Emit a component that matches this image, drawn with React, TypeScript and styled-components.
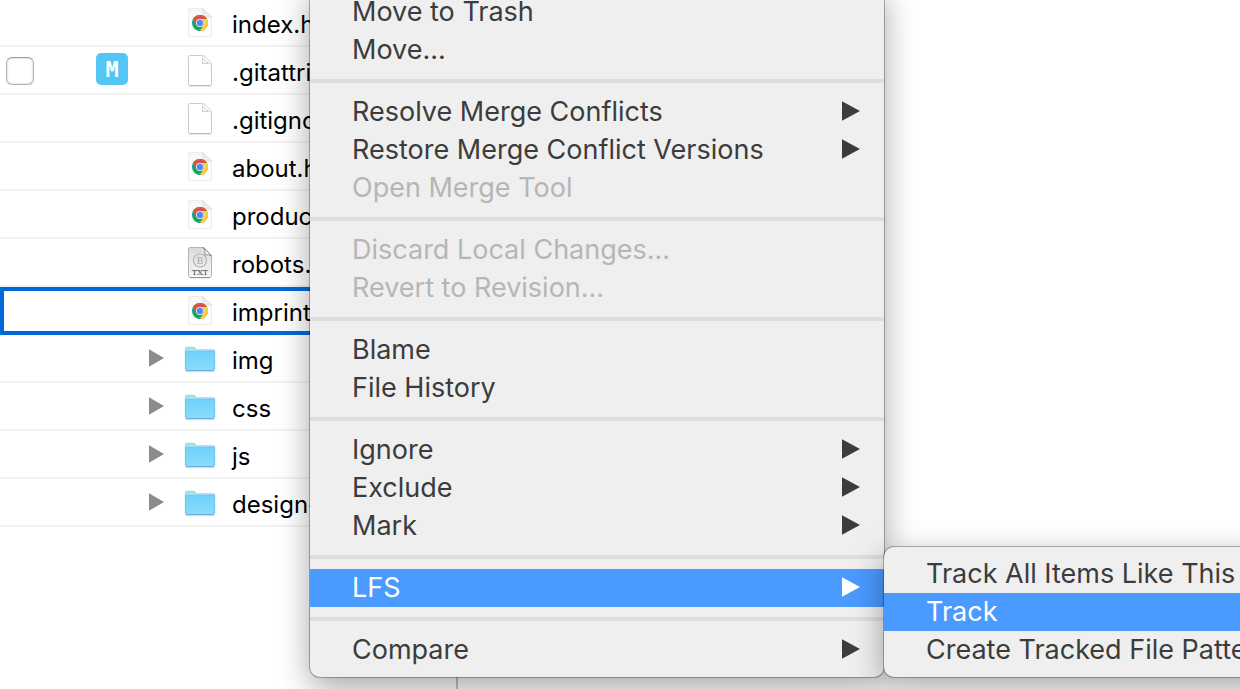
import React from 'react';
import styled, { createGlobalStyle } from 'styled-components';

const GlobalStyle = createGlobalStyle`
  * {
    box-sizing: border-box;
  }

  body {
    margin: 0;
    overflow: hidden;
    background: #ffffff;
    font-family: Inter, "Liberation Sans", sans-serif;
  }
`;

const Window = styled.main`
  position: relative;
  display: flex;
  min-height: 100vh;
  overflow: hidden;
`;

const FilePane = styled.section`
  flex: none;
  width: 458px;
  border-right: 2px solid #c4c4c4;
`;

const FileList = styled.ul`
  margin: -1px 0 0;
  padding: 0;
  list-style: none;
`;

const FileRow = styled.li<{ $focused?: boolean }>`
  display: grid;
  grid-template-columns: 96px 53px 35px 32px 1fr;
  align-items: center;
  height: 48px;
  border-bottom: 2px solid #f2f2f2;
  outline: ${({ $focused }) => ($focused ? '4px solid #0069d9' : 'none')};
  outline-offset: -4px;
`;

const Cell = styled.span`
  display: flex;
  align-items: center;
`;

const IconCell = styled(Cell)`
  padding-top: 2px;
`;

const CheckLabel = styled.label`
  display: flex;
  padding: 2px 0 0 6px;
`;

const StageCheckbox = styled.input`
  appearance: none;
  width: 28px;
  height: 28px;
  margin: 0;
  border: 1px solid #b4b4b4;
  border-top-color: #9a9a9a;
  border-radius: 6px;
  background: #ffffff;
  box-shadow: inset 0 0 2px rgba(0, 0, 0, 0.3);
`;

const StatusBadge = styled.span`
  display: grid;
  place-items: center;
  width: 32px;
  height: 32px;
  margin-bottom: 2px;
  padding-top: 2px;
  border-radius: 5px;
  background: #54c6f4;
  color: #ffffff;
  font: bold 22px/30px "DejaVu Sans Mono", monospace;
`;

const Disclosure = styled.button`
  display: flex;
  padding: 0;
  border: 0;
  background: none;
  color: #8b8b8b;
`;

const FileName = styled.span`
  padding: 6px 0 0 16px;
  color: #000000;
  font-size: 24px;
  line-height: 32px;
  white-space: nowrap;
`;

const Menu = styled.div`
  position: absolute;
  padding: 8px 0;
  border-radius: 10px;
  background: #efefef;
  box-shadow: 0 0 0 1px rgba(0, 0, 0, 0.28), 0 10px 32px rgba(0, 0, 0, 0.36);
`;

const ContextMenu = styled(Menu)`
  top: -15px;
  left: 310px;
  width: 574px;
`;

const SubMenu = styled(Menu)`
  top: -22px;
  left: 100%;
`;

const MenuEntry = styled.div`
  position: relative;
`;

const MenuItem = styled.button<{ $active?: boolean }>`
  display: flex;
  align-items: center;
  justify-content: space-between;
  width: 100%;
  height: 38px;
  padding: 0 24px 2px 42px;
  border: 0;
  background: ${({ $active }) => ($active ? '#4a9aff' : 'transparent')};
  color: ${({ $active }) => ($active ? '#ffffff' : '#3c3c3c')};
  font: 27px/34px Inter, "Liberation Sans", sans-serif;
  text-align: left;
  white-space: nowrap;

  &:disabled {
    color: #b6b6b6;
  }
`;

const MenuLabel = styled.span`
  padding-top: 2px;
`;

const Separator = styled.hr`
  height: 4px;
  margin: 10px 0;
  border: 0;
  background: #dedede;
`;

const Triangle = ({ width, height }: { width: number; height: number }) => (
  <svg width={width} height={height} viewBox="0 0 18 20" preserveAspectRatio="none" aria-hidden="true">
    <path d="M0 0.3 18 10 0 19.7Z" fill="currentColor" />
  </svg>
);

const PageIcon = () => (
  <svg width="32" height="34" viewBox="0 0 32 34" aria-hidden="true">
    <path d="M5.5 1.5H18.5Q21 2 23 4.5L26 7.5Q27.5 9.5 27.5 12V30Q27.5 31.5 26 31.5H6Q4.5 31.5 4.5 30V2.5Q4.5 1.5 5.5 1.5Z" fill="#fff" stroke="#cccccc" />
    <path d="M5 31.8H27" stroke="#b4b4b4" />
    <path d="M18.5 1.5V9.5H26" fill="none" stroke="#e2e2e2" />
    <path d="M18.5 4V9.5H24.5Z" fill="#fdfdfd" stroke="#cccccc" />
  </svg>
);

const ChromePageIcon = () => (
  <svg width="32" height="34" viewBox="0 0 32 34" aria-hidden="true">
    <defs>
      <linearGradient id="chrome-page" x1="0" y1="0" x2="0" y2="1">
        <stop offset="0" stopColor="#f5f5f5" />
        <stop offset="0.7" stopColor="#ffffff" />
      </linearGradient>
    </defs>
    <path d="M4.5 2.5H19L27.5 11V30.5H4.5Z" fill="url(#chrome-page)" stroke="#ececec" />
    <path d="M19 2.5V11H27.5Z" fill="#ececec" stroke="#e4e4e4" />
    <circle cx="16" cy="17" r="8" fill="#1da261" />
    <path d="M9.07 13A8 8 0 0 1 22.93 13H16A4 4 0 0 0 12.54 19Z" fill="#de5145" />
    <path d="M22.93 13A8 8 0 0 1 16 25L19.46 19A4 4 0 0 0 16 13Z" fill="#ffce46" />
    <circle cx="16" cy="17" r="4" fill="#eef3fa" />
    <circle cx="16" cy="17" r="3.2" fill="#4b8bf5" />
  </svg>
);

const TextPageIcon = () => (
  <svg width="32" height="34" viewBox="0 0 32 34" aria-hidden="true">
    <defs>
      <linearGradient id="txt-page" x1="0" y1="0" x2="0" y2="1">
        <stop offset="0" stopColor="#dadada" />
        <stop offset="1" stopColor="#f8f8f8" />
      </linearGradient>
    </defs>
    <path d="M6 1.5H20L27.5 9.5V29.5Q27.5 31.5 25.5 31.5H6.5Q4.5 31.5 4.5 29.5V3Q4.5 1.5 6 1.5Z" fill="url(#txt-page)" stroke="#b3b3b3" />
    <path d="M6 31.7H26" stroke="#8f8f8f" />
    <path d="M19.5 1.5Q21.5 5 21 9Q25 8 27.5 10Z" fill="#ffffff" stroke="#777" strokeWidth="0.8" />
    <circle cx="16" cy="14.5" r="6.5" fill="none" stroke="#b5b5b5" strokeWidth="1.2" />
    <text x="16" y="18" textAnchor="middle" fill="#aaaaaa" fontFamily="Liberation Serif, serif" fontSize="10">B</text>
    <text x="16" y="29" textAnchor="middle" fill="#444444" fontFamily="DejaVu Serif, serif" fontSize="8">TXT</text>
  </svg>
);

const FolderIcon = () => (
  <svg width="32" height="28" viewBox="0 0 32 28" aria-hidden="true">
    <defs>
      <linearGradient id="folder" x1="0" y1="0" x2="0" y2="1">
        <stop offset="0" stopColor="#72d0f8" />
        <stop offset="1" stopColor="#88dcfe" />
      </linearGradient>
    </defs>
    <path d="M1.5 24V3.5Q1.5 2.3 2.7 2.3H9.5Q10.5 2.3 11.2 3.2L12.5 4.8H29.5Q30.7 4.8 30.7 6V24Z" fill="#a5e3fc" stroke="#8bcbe8" strokeWidth="0.8" />
    <path d="M1.4 6.4H30.6V24.3Q30.6 25.5 29.4 25.5H2.6Q1.4 25.5 1.4 24.3Z" fill="url(#folder)" stroke="#6fc2e6" strokeWidth="0.8" />
    <path d="M2 25.6H30" stroke="#60afd2" />
    <path d="M2 26.6H30" stroke="#000" strokeOpacity="0.12" />
  </svg>
);

type Kind = 'chrome' | 'page' | 'txt' | 'folder';

const icons: Record<Kind, React.FC> = {
  chrome: ChromePageIcon,
  page: PageIcon,
  txt: TextPageIcon,
  folder: FolderIcon,
};

const files: { name: string; kind: Kind; modified?: boolean; focused?: boolean }[] = [
  { name: 'index.html', kind: 'chrome' },
  { name: '.gitattributes', kind: 'page', modified: true },
  { name: '.gitignore', kind: 'page' },
  { name: 'about.html', kind: 'chrome' },
  { name: 'product.html', kind: 'chrome' },
  { name: 'robots.txt', kind: 'txt' },
  { name: 'imprint.html', kind: 'chrome', focused: true },
  { name: 'img', kind: 'folder' },
  { name: 'css', kind: 'folder' },
  { name: 'js', kind: 'folder' },
  { name: 'design-files', kind: 'folder' },
];

type Entry = { label: string; disabled?: boolean; more?: boolean; children?: string[] };

const groups: Entry[][] = [
  [{ label: 'Move to Trash' }, { label: 'Move...' }],
  [
    { label: 'Resolve Merge Conflicts', more: true },
    { label: 'Restore Merge Conflict Versions', more: true },
    { label: 'Open Merge Tool', disabled: true },
  ],
  [
    { label: 'Discard Local Changes...', disabled: true },
    { label: 'Revert to Revision...', disabled: true },
  ],
  [{ label: 'Blame' }, { label: 'File History' }],
  [
    { label: 'Ignore', more: true },
    { label: 'Exclude', more: true },
    { label: 'Mark', more: true },
  ],
  [
    {
      label: 'LFS',
      more: true,
      children: ['Track All Items Like This', 'Track', 'Create Tracked File Pattern...'],
    },
  ],
  [{ label: 'Compare', more: true }],
];

export default function App() {
  return (
    <Window>
      <GlobalStyle />
      <FilePane aria-label="Files">
        <FileList>
          {files.map(({ name, kind, modified, focused }) => {
            const Icon = icons[kind];
            return (
              <FileRow key={name} $focused={focused}>
                <Cell>
                  {modified && (
                    <CheckLabel aria-label={`Stage ${name}`}>
                      <StageCheckbox type="checkbox" />
                    </CheckLabel>
                  )}
                </Cell>
                <Cell>{modified && <StatusBadge>M</StatusBadge>}</Cell>
                <Cell>
                  {kind === 'folder' && (
                    <Disclosure type="button" aria-label={`Expand ${name}`}>
                      <Triangle width={15} height={18} />
                    </Disclosure>
                  )}
                </Cell>
                <IconCell>
                  <Icon />
                </IconCell>
                <FileName>{name}</FileName>
              </FileRow>
            );
          })}
        </FileList>
      </FilePane>

      <ContextMenu role="menu">
        {groups.map((group, index) => (
          <React.Fragment key={group[0].label}>
            {index > 0 && <Separator />}
            {group.map(({ label, disabled, more, children }) => (
              <MenuEntry key={label}>
                <MenuItem type="button" role="menuitem" disabled={disabled} $active={!!children}>
                  <MenuLabel>{label}</MenuLabel>
                  {more && <Triangle width={18} height={20} />}
                </MenuItem>
                {children && (
                  <SubMenu role="menu">
                    {children.map((child) => (
                      <MenuItem key={child} type="button" role="menuitem" $active={child === 'Track'}>
                        <MenuLabel>{child}</MenuLabel>
                      </MenuItem>
                    ))}
                  </SubMenu>
                )}
              </MenuEntry>
            ))}
          </React.Fragment>
        ))}
      </ContextMenu>
    </Window>
  );
}
